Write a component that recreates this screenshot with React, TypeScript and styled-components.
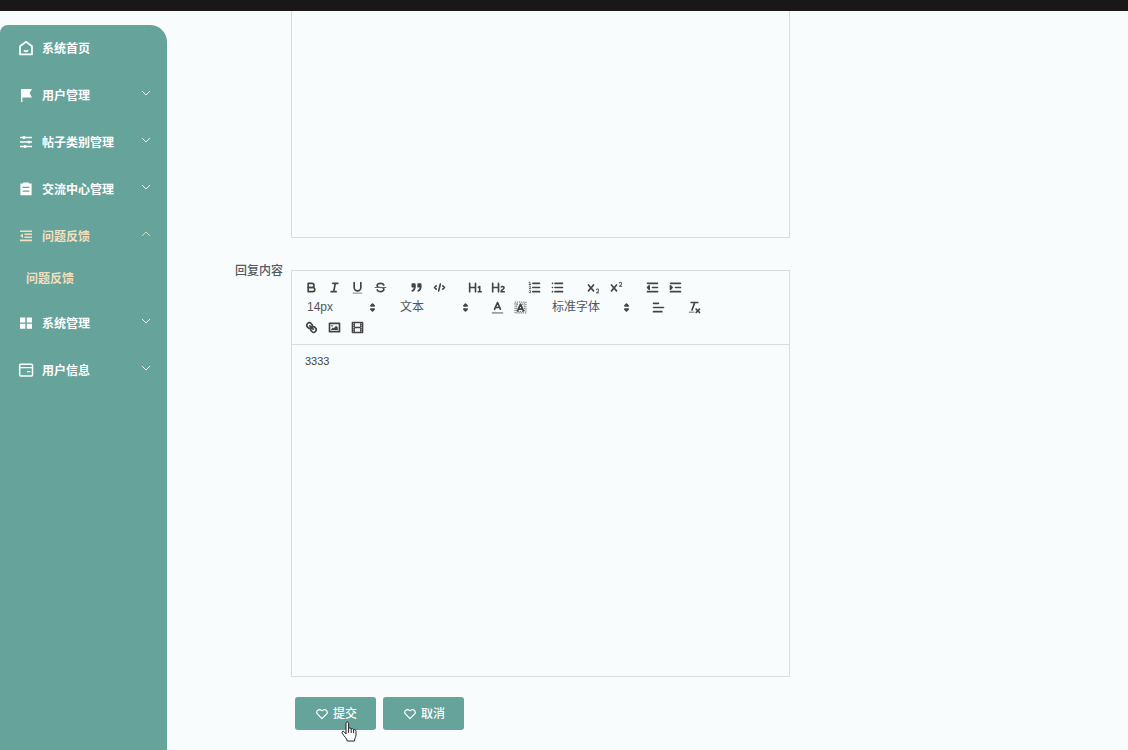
import React, { ReactNode } from 'react';
import styled, { createGlobalStyle } from 'styled-components';

const teal = '#65a39b';
const pageBg = '#f8fcfd';
const line = '#d9dcde';
const ink = '#444';

const GlobalStyle = createGlobalStyle`
  * { box-sizing: border-box; }
  body {
    margin: 0;
    background: ${pageBg};
    font-family: "Liberation Sans", "Noto Sans CJK SC", sans-serif;
    font-size: 12px;
  }
  button, select, textarea { font-family: inherit; }
`;

const Page = styled.div`
  display: flex;
  flex-direction: column;
  min-height: 100vh;
`;

const TopBar = styled.header`
  height: 11px;
  background: #191718;
`;

const Columns = styled.div`
  flex: 1;
  display: flex;
`;

const Sidebar = styled.nav`
  flex: 0 0 167px;
  margin-top: 14px;
  background: ${teal};
  border-radius: 8px 17px 0 0;
`;

const MenuItem = styled.button<{ $active?: boolean; $first?: boolean }>`
  display: flex;
  align-items: center;
  width: 100%;
  height: ${(p) => (p.$first ? 46 : 47)}px;
  padding: 0 16px 0 18px;
  border: 0;
  background: none;
  color: ${(p) => (p.$active ? '#f3dfbd' : '#fff')};
  font-size: 12px;
  font-weight: 700;
  line-height: 16px;
  text-align: left;
  cursor: pointer;
`;

const MenuIcon = styled.svg`
  width: 16px;
  height: 16px;
  margin-right: 8px;
  fill: currentColor;
`;

const MenuText = styled.span`
  flex: 1;
  padding-top: 2px;
`;

const Chevron = styled.svg<{ $up?: boolean }>`
  width: 10px;
  height: 10px;
  margin-bottom: 3px;
  fill: none;
  stroke: currentColor;
  opacity: 0.85;
  transform: ${(p) => (p.$up ? 'rotate(180deg)' : 'none')};
`;

const SubItem = styled.a`
  display: flex;
  align-items: center;
  height: 40px;
  padding-left: 26px;
  color: #f3dfbd;
  font-weight: 700;
  line-height: 16px;
  text-decoration: none;
`;

const Form = styled.form`
  flex: 1;
  min-width: 0;
  padding-left: 8px;
`;

const Field = styled.div`
  display: flex;
  margin-bottom: 32px;
`;

const FieldLabel = styled.label`
  flex: 0 0 116px;
  padding-right: 8px;
  margin-top: -8px;
  color: #555a60;
  font-weight: 500;
  line-height: 18px;
  text-align: right;
`;

const Editor = styled.div<{ $cut?: boolean }>`
  flex: 0 1 499px;
  min-width: 0;
  border: 1px solid ${line};
  border-top-width: ${(p) => (p.$cut ? 0 : 1)}px;
`;

const EditorText = styled.textarea<{ $rows: number }>`
  display: block;
  width: 100%;
  height: ${(p) => p.$rows}px;
  padding: 8px 13px;
  border: 0;
  outline: 0;
  resize: none;
  background: transparent;
  color: #444;
  font-size: 11px;
  line-height: 16px;
`;

const Toolbar = styled.div`
  padding: 6px 8px 7px;
  border-bottom: 1px solid ${line};
`;

const ToolRow = styled.div`
  display: flex;
  gap: 13px;
  height: 20px;
`;

const ToolGroup = styled.div`
  display: flex;
`;

const Tool = styled.button`
  display: flex;
  align-items: center;
  justify-content: center;
  width: 23px;
  height: 20px;
  padding: 0;
  border: 0;
  background: none;
  cursor: pointer;
`;

const Glyph = styled.svg`
  width: 15px;
  height: 15px;
  fill: none;
  stroke: ${ink};
  stroke-width: 2;
  stroke-linecap: round;
  stroke-linejoin: round;
  .fill { fill: ${ink}; stroke: none; }
  .both { fill: ${ink}; }
  .thin { stroke-width: 1; }
  .soft { opacity: 0.5; }
`;

const Picker = styled.span<{ $width: number }>`
  position: relative;
  width: ${(p) => p.$width}px;
  height: 20px;
`;

const PickerSelect = styled.select`
  appearance: none;
  width: 100%;
  height: 20px;
  padding: 1px 0 0 7px;
  border: 0;
  background: transparent;
  color: #555;
  font-size: 12px;
  line-height: 19px;
`;

const PickerArrows = styled(Glyph)`
  position: absolute;
  top: 3px;
  right: 0;
  pointer-events: none;
`;

const Actions = styled.div`
  display: flex;
  gap: 7px;
  margin-top: -12px;
  padding-left: 120px;
`;

const Action = styled.button`
  position: relative;
  display: flex;
  align-items: center;
  justify-content: center;
  gap: 5px;
  width: 81px;
  height: 33px;
  padding: 0 0 0 2px;
  border: 0;
  border-radius: 3px;
  background: ${teal};
  color: #fff;
  font-size: 12px;
  font-weight: 500;
  line-height: 18px;
  cursor: pointer;
`;

const Heart = styled.svg`
  width: 12px;
  height: 12px;
  fill: none;
  stroke: currentColor;
  stroke-width: 1.2;
`;

const Pointer = styled.svg`
  position: absolute;
  left: 46px;
  top: 24px;
  width: 16px;
  height: 21px;
  pointer-events: none;
`;

const X_SHAPE =
  'M9.65,5.241a1,1,0,0,0-1.409.108L6,7.964,3.759,5.349A1,1,0,0,0,2.192,6.592Q2.215,6.621,2.241,6.649L4.684,9.5,2.241,12.35A1,1,0,0,0,3.71,13.707q0.026-.028.049-0.057L6,11.036,8.241,13.65a1,1,0,1,0,1.567-1.243Q9.785,12.378,9.759,12.35L7.316,9.5,9.759,6.651A1,1,0,0,0,9.65,5.241Z';
const SMALL_TWO =
  'M15.5,15H13.861a3.858,3.858,0,0,0,1.914-2.975,1.8,1.8,0,0,0-1.6-1.751A1.921,1.921,0,0,0,12.021,11.7a0.5,0.5,0,1,0,.957.291h0a0.914,0.914,0,0,1,1.053-.725,0.81,0.81,0,0,1,.744.762c0,1.076-1.17,1.87-1.94,2.431A1.456,1.456,0,0,0,12,15.5a0.5,0.5,0,0,0,.5.5h3A0.5,0.5,0,0,0,15.5,15Z';

const glyphs: Record<string, ReactNode> = {
  粗体: (
    <>
      <path d="M5,4H9.5a2.5,2.5,0,0,1,0,5H5Z" />
      <path d="M5,9h5.5a2.5,2.5,0,0,1,0,5H5Z" />
    </>
  ),
  斜体: <path d="M7,4H13M5,14H11M8,14L10,4" />,
  下划线: (
    <>
      <path d="M5,3V9a4,4,0,0,0,8,0V3" />
      <rect className="fill soft" x="3" y="15" width="12" height="1.4" rx="0.5" />
    </>
  ),
  删除线: (
    <>
      <path className="thin" d="M2.5,9H15.5" />
      <path className="fill" d="M9.007,8C6.542,7.791,6,7.519,6,6.5,6,5.792,7.283,5,9,5c1.571,0,2.765.679,2.969,1.309a1,1,0,0,0,1.9-.617C13.356,4.106,11.354,3,9,3,6.2,3,4,4.538,4,6.5a3.2,3.2,0,0,0,.5,1.843Z" />
      <path className="fill" d="M8.984,10C11.457,10.208,12,10.479,12,11.5c0,.708-1.283,1.5-3,1.5-1.571,0-2.765-.679-2.969-1.309a1,1,0,1,0-1.9.617C4.644,13.894,6.646,15,9,15c2.8,0,5-1.538,5-3.5a3.2,3.2,0,0,0-.5-1.843Z" />
    </>
  ),
  引用: (
    <>
      <rect className="both" x="4" y="5" width="3" height="3" />
      <rect className="both" x="11" y="5" width="3" height="3" />
      <path className="both" d="M7,8c0,4.031-3,5-3,5M14,8c0,4.031-3,5-3,5" />
    </>
  ),
  代码: <path d="M5,7L3,9L5,11M13,7L15,9L13,11M10,5L8,13" />,
  标题一: (
    <path className="fill" d="M10,4V14a1,1,0,0,1-2,0V10H3v4a1,1,0,0,1-2,0V4A1,1,0,0,1,3,4V8H8V4a1,1,0,0,1,2,0Zm6.068,9.209H14.99V7.599a.541.541,0,0,0-.605-.605h-.627a1.011,1.011,0,0,0-.748.297L11.645,8.566a.543.543,0,0,0-.022.858l.286.308a.539.539,0,0,0,.847.033l.099-.088a1.214,1.214,0,0,0,.242-.353h.022s-.011.309-.011.605V13.209H12.041a.541.541,0,0,0-.605.605v.44a.541.541,0,0,0,.605.605h4.027a.541.541,0,0,0,.605-.605v-.44A.541.541,0,0,0,16.068,13.209Z" />
  ),
  标题二: (
    <path className="fill" d="M16.74,13.814v.44a.541.541,0,0,1-.605.605H11.855a.584.584,0,0,1-.649-.605V14.013c0-2.905,3.399-3.422,3.399-4.555a.777.777,0,0,0-.847-.781,1.177,1.177,0,0,0-.836.385c-.275.264-.561.374-.858.132l-.429-.341c-.308-.242-.385-.518-.154-.814a2.972,2.972,0,0,1,2.454-1.177,2.454,2.454,0,0,1,2.684,2.409c0,2.453-3.179,2.927-3.278,3.938h2.794A.541.541,0,0,1,16.74,13.814ZM9,3A1,1,0,0,0,8,4V8H3V4A1,1,0,0,0,1,4V14a1,1,0,0,0,2,0V10H8v4a1,1,0,0,0,2,0V4A1,1,0,0,0,9,3Z" />
  ),
  有序列表: (
    <>
      <path d="M7,4H15M7,9H15M7,14H15" />
      <path className="thin" d="M2.5,5.5H4.5M2.5,2.8L3.5,2.5V5.5M4.5,10.5h-2c0-.234,1.85-1.076,1.85-2.234A0.959,0.959,0,0,0,2.5,8.156M2.5,14.846a0.959,0.959,0,0,0,1.85-.109A0.7,0.7,0,0,0,3.75,14a0.688,0.688,0,0,0,.6-0.736,0.959,0.959,0,0,0-1.85-.109" />
    </>
  ),
  无序列表: <path d="M6,4H15M6,9H15M6,14H15M3,4H3.01M3,9H3.01M3,14H3.01" />,
  下标: (
    <>
      <path className="fill" d={X_SHAPE} />
      <path className="fill" d={SMALL_TWO} />
    </>
  ),
  上标: (
    <>
      <path className="fill" d={X_SHAPE} />
      <path className="fill" d={SMALL_TWO} transform="translate(0 -8)" />
    </>
  ),
  减少缩进: (
    <>
      <path d="M3,14H15M3,4H15M9,9H15" />
      <path className="both" d="M5,7V11L3,9Z" />
    </>
  ),
  增加缩进: (
    <>
      <path d="M3,14H15M3,4H15M9,9H15" />
      <path className="both" d="M3,7V11L5,9Z" />
    </>
  ),
  文字颜色: (
    <>
      <path className="soft" d="M3,15.5H15" />
      <path d="M5.5,11L9,3L12.5,11M11.63,9H6.38" />
    </>
  ),
  背景颜色: (
    <>
      <path className="thin" strokeDasharray="0.6 2" d="M2.5,2.5H15.5V15.5H2.5ZM4.5,4.5V13.5M13.5,4.5V13.5M5,5H7M11,5H13M6,14H12" />
      <path d="M5.5,13L9,5L12.5,13M11.63,11H6.38" />
    </>
  ),
  对齐: <path d="M3,9H15M3,14H13M3,4H9" />,
  清除格式: (
    <>
      <path d="M5,3H13M6,12L9.35,3M11,11L15,15M15,11L11,15" />
      <rect className="fill" x="2" y="14" width="7" height="1" rx="0.5" />
    </>
  ),
  链接: (
    <>
      <path d="M7,7L11,11" />
      <path d="M8.9,4.577a3.476,3.476,0,0,1,.36,4.679A3.476,3.476,0,0,1,4.577,8.9C3.185,7.5,2.035,6.4,4.217,4.217S7.5,3.185,8.9,4.577Z" />
      <path d="M13.423,9.1a3.476,3.476,0,0,0-4.679-.36,3.476,3.476,0,0,0,.36,4.679c1.392,1.392,2.5,2.542,4.679.36S14.815,10.5,13.423,9.1Z" />
    </>
  ),
  图片: (
    <>
      <rect x="3" y="4" width="12" height="10" />
      <circle className="fill" cx="6" cy="7" r="1" />
      <path className="fill" d="M5,12V11L7,9L8,10L11,7L13,9V12Z" />
    </>
  ),
  视频: (
    <>
      <rect x="3" y="3" width="12" height="12" />
      <path className="fill" d="M5,3h1v12H5ZM12,3h1v12h-1ZM5,8h8v2H5ZM3,5h3v1H3ZM3,7h3v1H3ZM3,10h3v1H3ZM3,12h3v1H3ZM12,5h3v1h-3ZM12,7h3v1h-3ZM12,10h3v1h-3ZM12,12h3v1h-3Z" />
    </>
  ),
};

const Tools = ({ names }: { names: string[] }) => (
  <ToolGroup>
    {names.map((name) => (
      <Tool key={name} type="button" aria-label={name}>
        <Glyph viewBox="0 0 18 18">{glyphs[name]}</Glyph>
      </Tool>
    ))}
  </ToolGroup>
);

const PickerBox = ({ label, value, width }: { label: string; value: string; width: number }) => (
  <Picker $width={width}>
    <PickerSelect aria-label={label}>
      <option>{value}</option>
    </PickerSelect>
    <PickerArrows viewBox="0 0 18 18">
      <path className="both" d="M7,11L9,13L11,11ZM7,7L9,5L11,7Z" />
    </PickerArrows>
  </Picker>
);

const menuIcons: Record<string, ReactNode> = {
  home: (
    <path fill="none" stroke="currentColor" strokeWidth="1.7" strokeLinejoin="round" d="M8,1.8L14,6.2V14.4H2V6.2ZM5.8,10.4C7,11.4,9,11.4,10.2,10.4" />
  ),
  flag: <path d="M3,2H14L11.6,6L14,10.4H4.4V15H3Z" />,
  sliders: (
    <>
      <path d="M2,2.8H14V4.2H2ZM2,7.3H14V8.7H2ZM2,11.8H14V13.2H2Z" />
      <circle cx="6" cy="3.5" r="1.5" />
      <circle cx="11" cy="8" r="1.5" />
      <circle cx="7" cy="12.5" r="1.5" />
    </>
  ),
  clipboard: (
    <path fillRule="evenodd" d="M2.4,2.6H5.2V1.6H10.8V2.6H13.6V14.2H2.4ZM4.6,5.8V6.9H11.4V5.8ZM4.6,9.6V10.7H11.4V9.6Z" />
  ),
  fold: <path d="M2,2.4H14V4H2ZM6.4,5.6H14V7.1H6.4ZM6.4,8.6H14V10.1H6.4ZM2,11.6H14V13.2H2ZM2,7.8L5,5.6V10Z" />,
  grid: <path d="M2,2.4H7.3V7.4H2ZM8.8,2.4H14V7.4H8.8ZM2,8.8H7.3V13.8H2ZM8.8,8.8H14V13.8H8.8Z" />,
  card: (
    <>
      <rect x="1.7" y="2.2" width="12.8" height="11.8" rx="1" fill="none" stroke="currentColor" strokeWidth="1.5" />
      <path d="M2,5H14V6.3H2ZM9,9H12.5V10.2H9Z" />
    </>
  ),
};

type ItemProps = { icon: string; text: string; first?: boolean; active?: boolean };

const Item = ({ icon, text, first, active }: ItemProps) => (
  <MenuItem type="button" $first={first} $active={active}>
    <MenuIcon viewBox="0 0 16 16">{menuIcons[icon]}</MenuIcon>
    <MenuText>{text}</MenuText>
    {!first && (
      <Chevron viewBox="0 0 10 10" $up={active}>
        <path d="M1,3L5,7L9,3" />
      </Chevron>
    )}
  </MenuItem>
);

const HeartIcon = () => (
  <Heart viewBox="0 0 12 12">
    <path d="M6,10.6L1.6,6.2A2.7,2.7,0,0,1,1.6,2.4A2.8,2.8,0,0,1,5.4,2.4L6,2.8L6.6,2.4A2.8,2.8,0,0,1,10.4,2.4A2.7,2.7,0,0,1,10.4,6.2Z" />
  </Heart>
);

export default function App() {
  return (
    <Page>
      <GlobalStyle />
      <TopBar />
      <Columns>
        <Sidebar>
          <Item icon="home" text="系统首页" first />
          <Item icon="flag" text="用户管理" />
          <Item icon="sliders" text="帖子类别管理" />
          <Item icon="clipboard" text="交流中心管理" />
          <Item icon="fold" text="问题反馈" active />
          <SubItem href="#feedback">问题反馈</SubItem>
          <Item icon="grid" text="系统管理" />
          <Item icon="card" text="用户信息" />
        </Sidebar>
        <Form>
          <Field>
            <FieldLabel as="span" />
            <Editor $cut>
              <EditorText $rows={226} aria-label="反馈内容" />
            </Editor>
          </Field>
          <Field>
            <FieldLabel htmlFor="reply">回复内容</FieldLabel>
            <Editor>
              <Toolbar>
                <ToolRow>
                  <Tools names={['粗体', '斜体', '下划线', '删除线']} />
                  <Tools names={['引用', '代码']} />
                  <Tools names={['标题一', '标题二']} />
                  <Tools names={['有序列表', '无序列表']} />
                  <Tools names={['下标', '上标']} />
                  <Tools names={['减少缩进', '增加缩进']} />
                </ToolRow>
                <ToolRow>
                  <PickerBox label="字号" value="14px" width={80} />
                  <PickerBox label="标题" value="文本" width={80} />
                  <Tools names={['文字颜色', '背景颜色']} />
                  <PickerBox label="字体" value="标准字体" width={89} />
                  <Tools names={['对齐']} />
                  <Tools names={['清除格式']} />
                </ToolRow>
                <ToolRow>
                  <Tools names={['链接', '图片', '视频']} />
                </ToolRow>
              </Toolbar>
              <EditorText id="reply" $rows={331} defaultValue="3333" />
            </Editor>
          </Field>
          <Actions>
            <Action type="button">
              <HeartIcon />
              提交
              <Pointer viewBox="0 0 16 21">
                <path
                  d="M5,13V2.2C5,0.4,7.6,0.4,7.6,2.2V7.6C8,6.6,10,6.8,10.2,8C10.8,7.2,12.4,7.6,12.6,8.8C13.4,8.2,15,8.8,15,10.2V14C15,16,13.6,17,13.4,20H6.2C6,17.4,3,15.4,1.2,12.2C0.4,10.6,2.2,9.8,3.2,10.8L5,13Z"
                  fill="#fff"
                  stroke="#222"
                  strokeLinejoin="round"
                />
                <path d="M7.6,7.6V11.4M10.2,8V11.6M12.6,8.8V11.8" fill="none" stroke="#222" strokeLinecap="round" />
              </Pointer>
            </Action>
            <Action type="button">
              <HeartIcon />
              取消
            </Action>
          </Actions>
        </Form>
      </Columns>
    </Page>
  );
}
